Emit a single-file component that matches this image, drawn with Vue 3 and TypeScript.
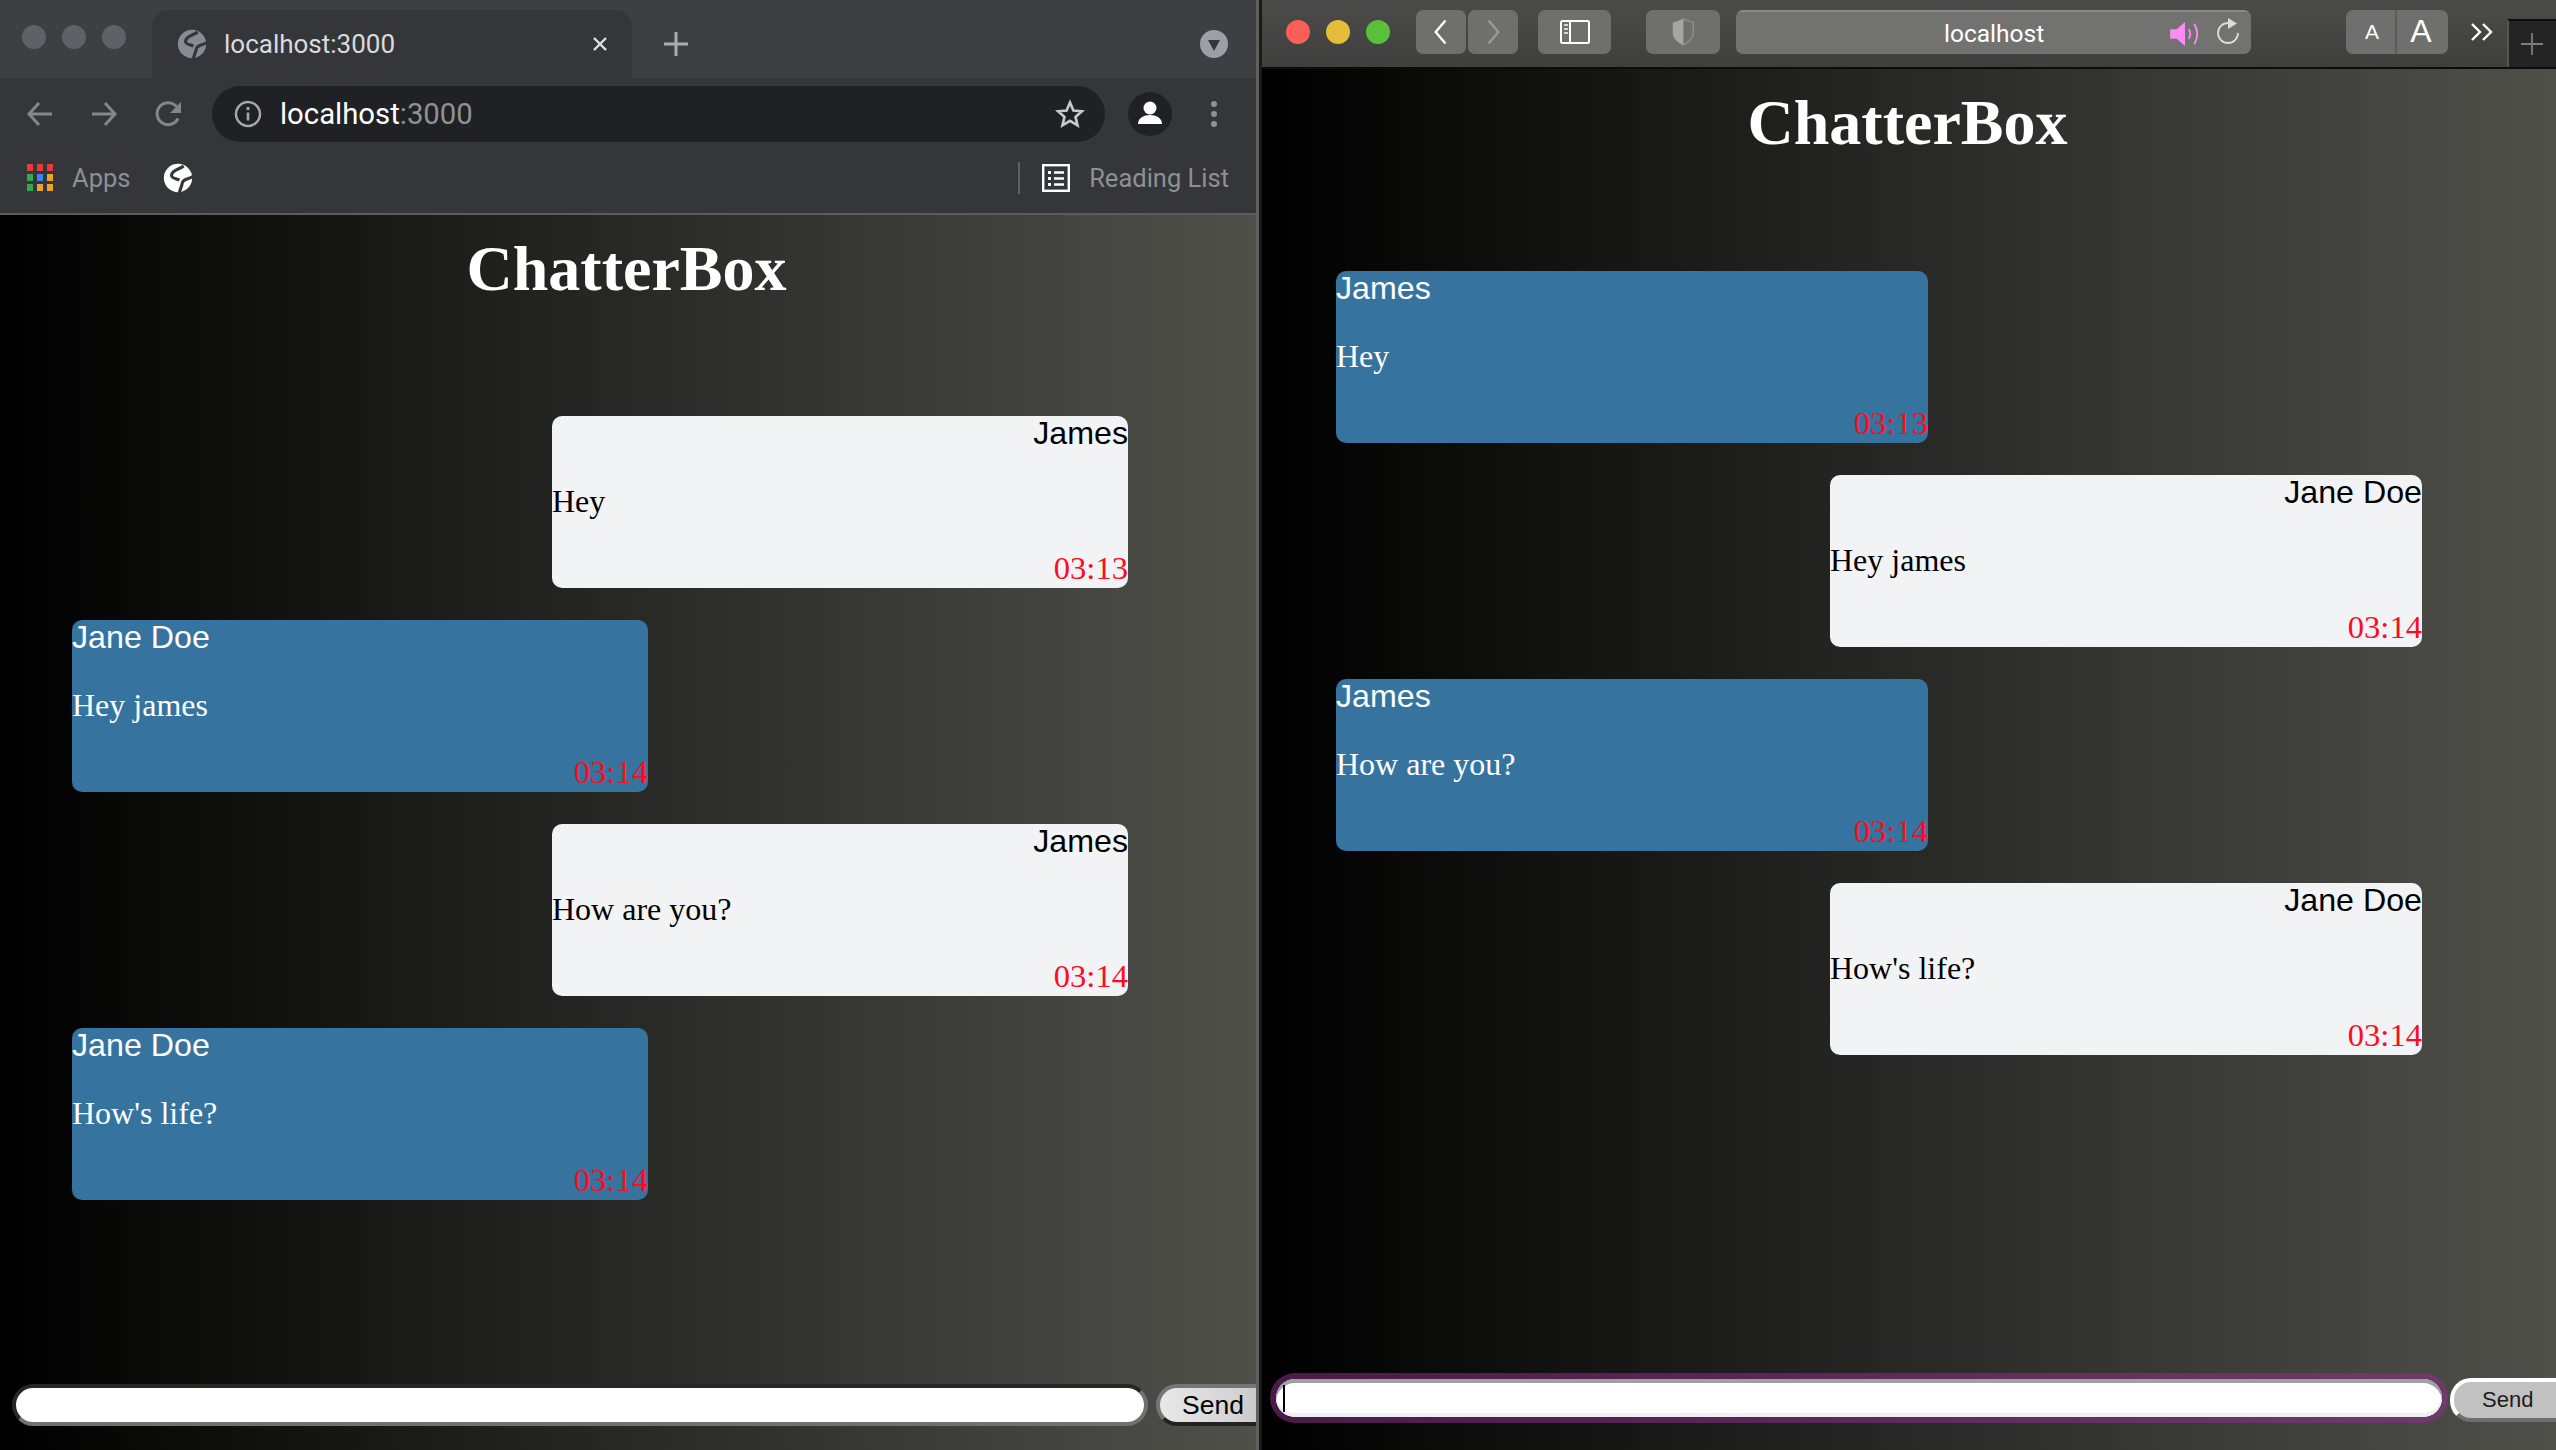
<script setup lang="ts">
interface Msg { id: number; name: string; text: string; time: string; own: boolean }
const chromeMsgs: Msg[] = [
  { id: 1, name: 'James', text: 'Hey', time: '03:13', own: true },
  { id: 2, name: 'Jane Doe', text: 'Hey james', time: '03:14', own: false },
  { id: 3, name: 'James', text: 'How are you?', time: '03:14', own: true },
  { id: 4, name: 'Jane Doe', text: "How's life?", time: '03:14', own: false },
]
const safariMsgs: Msg[] = chromeMsgs.map((m) => ({ ...m, own: !m.own }))
const swirlA = 'M16 3.500C13 6 8.500 6 7.500 9.500 6.800 12.500 10.500 12 13 13.500'
const swirlB = 'M22.500 11C19 13 15.500 12.500 15 15.500 14.700 18 13.500 19.500 13 22.500'
</script>

<template>
  <div class="desk">
    <section class="win win-chrome">
      <header class="chrome-bar">
        <div class="tabstrip">
          <div class="lights">
            <i class="dot"></i><i class="dot"></i><i class="dot"></i>
          </div>
          <div class="tab">
            <svg class="fav" viewBox="0 0 24 24"><circle cx="12" cy="12" r="10" fill="#868c92" /><path :d="swirlA" stroke="#35363a" stroke-width="2.200" fill="none" /><path :d="swirlB" stroke="#35363a" stroke-width="2.200" fill="none" /></svg>
            <span class="tab-title">localhost:3000</span>
            <svg class="tab-x" viewBox="0 0 18 18"><path d="M3 3l12 12M15 3L3 15" stroke="#dfe1e3" stroke-width="2.400" fill="none" /></svg>
          </div>
          <svg class="tab-plus" viewBox="0 0 24 24"><path d="M12 1v22M1 12h22" stroke="#a9adb1" stroke-width="3" stroke-linecap="round" fill="none" /></svg>
          <span class="tab-menu"><svg viewBox="0 0 28 28"><circle cx="14" cy="14" r="14" fill="#9aa0a6" /><path d="M8 10h12l-6 11z" fill="#35363a" /></svg></span>
        </div>
        <div class="navbar">
          <svg class="nav-ico" viewBox="0 0 28 28"><path d="M26 14H3M13 3L3 14l10 11" stroke="#84878a" stroke-width="3" fill="none" /></svg>
          <svg class="nav-ico" viewBox="0 0 28 28"><path d="M2 14h23M15 3l10 11-10 11" stroke="#84878a" stroke-width="3" fill="none" /></svg>
          <svg class="nav-ico" viewBox="0 0 28 28"><path d="M23 18.500A11 11 0 1 1 21.500 6.500" stroke="#84878a" stroke-width="3" fill="none" /><path d="M26 2v11H15z" fill="#84878a" /></svg>
          <div class="omnibox">
            <svg class="info" viewBox="0 0 28 28"><circle cx="14" cy="14" r="12" stroke="#a5a7a9" stroke-width="2.500" fill="none" /><path d="M14 12.500v8" stroke="#a5a7a9" stroke-width="2.600" /><circle cx="14" cy="8.500" r="1.700" fill="#a5a7a9" /></svg>
            <span class="omni-text"><span class="omni-host">localhost</span>:3000</span>
            <svg class="star" viewBox="0 0 30 30"><path d="M15 3.500l3.400 8 8.600.7-6.500 5.700 2 8.400-7.500-4.500-7.500 4.500 2-8.400L3 12.200l8.600-.7z" stroke="#c8cacc" stroke-width="2.600" fill="none" /></svg>
          </div>
          <span class="avatar"><svg viewBox="0 0 44 44"><circle cx="22" cy="16" r="6.500" fill="#fff" /><path d="M10 32c0-6 6-9 12-9s12 3 12 9z" fill="#fff" /></svg></span>
          <span class="kebab"><i></i><i></i><i></i></span>
        </div>
        <div class="bookmarks">
          <span class="apps-grid"><i v-for="(c, i) in ['#e8393b','#e8393b','#e8393b','#35a853','#3a83f1','#eda22b','#35a853','#eda22b','#eda22b']" :key="i" :style="{ background: c }"></i></span>
          <span class="bm-label">Apps</span>
          <svg class="bm-globe" viewBox="0 0 24 24"><circle cx="12" cy="12" r="10" fill="#fff" /><path :d="swirlA" stroke="#35363a" stroke-width="2.200" fill="none" /><path :d="swirlB" stroke="#35363a" stroke-width="2.200" fill="none" /></svg>
          <span class="bm-sep"></span>
          <svg class="list-ico" viewBox="0 0 28 28"><rect x="1.200" y="1.200" width="25.600" height="25.600" fill="none" stroke="#fff" stroke-width="2.400" /><path d="M6 7h3v3H6zM6 13h3v3H6zM6 19h3v3H6z" fill="#fff" /><path d="M12 8.500h10M12 14.500h10M12 20.500h10" stroke="#fff" stroke-width="2.400" /></svg>
          <span class="bm-label">Reading List</span>
        </div>
      </header>
      <main class="page">
        <h1 class="title">ChatterBox</h1>
        <div class="thread">
          <article v-for="m in chromeMsgs" :key="m.id" class="bubble" :class="m.own ? 'own' : 'other'">
            <h4 class="name">{{ m.name }}</h4>
            <p class="text">{{ m.text }}</p>
            <time class="time">{{ m.time }}</time>
          </article>
        </div>
        <form class="composer" @submit.prevent>
          <input class="field" type="text" aria-label="Message" />
          <button class="send">Send</button>
        </form>
      </main>
    </section>

    <div class="split"></div>

    <section class="win win-safari">
      <header class="safari-bar">
        <div class="traffic"><i class="red"></i><i class="yellow"></i><i class="green"></i></div>
        <div class="pair">
          <span class="sbtn nav"><svg viewBox="0 0 18 30"><path d="M14 2L3 15l11 13" stroke="#fff" stroke-width="2.600" fill="none" /></svg></span>
          <span class="sbtn nav"><svg viewBox="0 0 18 30"><path d="M4 2l11 13L4 28" stroke="#9b9b99" stroke-width="2.600" fill="none" /></svg></span>
        </div>
        <span class="sbtn side"><svg viewBox="0 0 30 24"><rect x="1" y="1" width="28" height="22" rx="1.500" fill="none" stroke="#fff" stroke-width="2" /><path d="M10 1v22" stroke="#fff" stroke-width="2" /><path d="M4 5h4M4 9h4M4 13h4" stroke="#d8d8d8" stroke-width="2" /></svg></span>
        <span class="sbtn shield"><svg viewBox="0 0 24 30"><path d="M12 1l11 4v11c0 6-5 10-11 13z" fill="#6f6f6d" stroke="#8f8f8d" stroke-width="1.500" /><path d="M12 1L1 5v11c0 6 5 10 11 13z" fill="#a5a5a3" /></svg></span>
        <div class="urlbar">
          <span class="url-text">localhost</span>
          <svg class="sound" viewBox="0 0 32 28"><path d="M0 9h7l9-8v26l-9-8H0z" fill="#fb8af3" /><path d="M20 9c2 3 2 7 0 10M26 3c4 7 4 15 0 22" stroke="#fb8af3" stroke-width="2" fill="none" /></svg>
          <svg class="sreload" viewBox="0 0 24 26"><path d="M12 5A10 10 0 1 0 22 15" stroke="#dcdcdc" stroke-width="1.800" fill="none" /><path d="M12 0l9 5.500-9 5.500z" fill="#dcdcdc" /></svg>
        </div>
        <div class="font-size">
          <span class="a-small">A</span>
          <span class="a-large">A</span>
        </div>
        <svg class="more" viewBox="0 0 24 20"><path d="M2 2l8 8-8 8M13 2l8 8-8 8" stroke="#fff" stroke-width="2.400" fill="none" /></svg>
        <span class="newtab"><svg viewBox="0 0 24 24"><path d="M12 1v22M1 12h22" stroke="#7d7d7b" stroke-width="1.800" fill="none" /></svg></span>
      </header>
      <main class="page">
        <h1 class="title">ChatterBox</h1>
        <div class="thread">
          <article v-for="m in safariMsgs" :key="m.id" class="bubble" :class="m.own ? 'own' : 'other'">
            <h4 class="name">{{ m.name }}</h4>
            <p class="text">{{ m.text }}</p>
            <time class="time">{{ m.time }}</time>
          </article>
        </div>
        <form class="composer" @submit.prevent>
          <div class="field-focus"><span class="caret"></span></div>
          <button class="send">Send</button>
        </form>
      </main>
    </section>
  </div>
</template>

<style>
html, body { margin: 0; background: #000; overflow: hidden; }
</style>

<style scoped>
.desk { display: flex; width: 2556px; height: 1450px; overflow: hidden; }
.win { display: flex; flex-direction: column; height: 100%; overflow: hidden; }
.win-chrome { width: 1256px; }
.win-safari { width: 1294px; }
.split { width: 6px; background: linear-gradient(90deg, #5f5f5d 0 3px, #1a1a1a 3px); }
i { display: block; }

/* chrome */
.chrome-bar { background: #35363a; height: 215px; box-sizing: border-box; border-bottom: 2px solid #5c5c5a; flex: none; font-family: Roboto, "Liberation Sans", sans-serif; }
.tabstrip { height: 78px; background: #3d4043; display: flex; align-items: flex-start; }
.lights { display: flex; gap: 16px; padding: 25px 0 0 22px; width: 130px; box-sizing: border-box; }
.dot { width: 24px; height: 24px; border-radius: 50%; background: #5e6266; }
.tab { margin-top: 10px; width: 480px; height: 68px; background: #35363a; border-radius: 16px 16px 0 0; display: flex; align-items: center; box-sizing: border-box; padding: 0 23px 0 26px; position: relative; margin-left: 22px; }
.fav { width: 34px; height: 34px; margin-left: -3px; flex: none; }
.tab-title { color: #d9dbdd; font-size: 26px; margin-left: 15px; flex: 1; }
.tab-x { width: 18px; height: 18px; flex: none; }
.tab-plus { width: 24px; height: 24px; margin: 32px 0 0 32px; flex: none; }
.tab-menu { width: 28px; height: 28px; margin: 30px 0 0 512px; flex: none; }
.tab-menu svg { display: block; width: 28px; height: 28px; }
.navbar { height: 72px; display: flex; align-items: center; padding: 0 0 0 26px; position: relative; }
.nav-ico { width: 28px; height: 28px; margin-right: 36px; flex: none; }
.nav-ico:nth-child(2) { margin-right: 37px; }
.nav-ico:nth-child(3) { margin-right: 29px; }
.omnibox { width: 893px; height: 56px; border-radius: 28px; background: #202124; display: flex; align-items: center; padding: 0 20px 0 22px; box-sizing: border-box; flex: none; }
.info { width: 28px; height: 28px; flex: none; }
.omni-text { color: #8f9193; font-size: 29.300px; margin-left: 18px; flex: 1; }
.omni-host { color: #fff; }
.star { width: 30px; height: 30px; flex: none; }
.avatar { width: 44px; height: 44px; border-radius: 50%; background: #202124; margin-left: 23px; flex: none; }
.avatar svg { display: block; width: 44px; height: 44px; }
.kebab { display: flex; flex-direction: column; gap: 4px; margin-left: 39px; }
.kebab i { width: 6px; height: 6px; border-radius: 50%; background: #8f9194; }
.bookmarks { height: 63px; display: flex; align-items: center; padding: 0 27px 8px 27px; box-sizing: border-box; color: #8d9093; font-size: 25.500px; }
.apps-grid { width: 26px; height: 27px; display: grid; grid-template-columns: repeat(3, 6px); grid-auto-rows: 7px; justify-content: space-between; align-content: space-between; flex: none; }
.bm-label { flex: none; }
.apps-grid + .bm-label { margin-left: 19px; }
.bm-globe { width: 34px; height: 34px; margin-left: 31px; flex: none; }
.bm-sep { width: 2px; height: 32px; background: #5f6063; margin-left: auto; flex: none; }
.list-ico { width: 28px; height: 28px; margin: 0 19px 0 22px; flex: none; }

/* page */
.page { flex: 1; min-height: 0; display: flex; flex-direction: column; background: linear-gradient(90deg, #000, #50504b); overflow: hidden; }
.title { margin: 17px 0 0; padding-right: 3px; font: bold 64px/73px "Liberation Serif", serif; color: #fff; text-align: center; }
.thread { display: flex; flex-direction: column; gap: 32px; }
.win-chrome .thread { padding: 111px 128px 0 72px; }
.win-safari .thread { padding: 112px 134px 0 74px; }
.bubble { height: 172px; border-radius: 10px; display: flex; flex-direction: column; }
.win-chrome .bubble { width: 576px; }
.win-safari .bubble { width: 592px; }
.own { background: #f2f3f5; color: #000; align-self: flex-end; }
.other { background: #36749f; color: #fff; align-self: flex-start; }
.name { margin: 0; font: normal 32.200px/34px "Liberation Sans", Arial, sans-serif; }
.own .name { text-align: right; }
.text { margin: 33px 0 0; font: 32px/37px "Liberation Serif", serif; }
.time { margin: auto 0 2px; font: 32.600px/36px "Liberation Serif", serif; color: #ff0a1e; text-align: right; }

/* composer */
.composer { margin-top: auto; display: flex; align-items: flex-start; flex: none; }
.win-chrome .composer { padding: 0 0 24px 12px; gap: 8px; }
.win-safari .composer { padding: 0 0 27px 8px; gap: 2px; }
.field { width: 1136px; height: 42px; box-sizing: border-box; border-radius: 21px; border: 4px solid; border-color: #262626 #707070 #707070 #262626; background: #fff; padding: 0; outline: none; flex: none; }
.send { flex: none; height: 42px; width: 130px; box-sizing: border-box; border-radius: 21px; font: 26.500px/30px "Liberation Sans", Arial, sans-serif; color: #000; padding: 0 0 0 22px; text-align: left; }
.win-chrome .send { border: 4px solid; border-color: #757575 #222 #222 #757575; background: linear-gradient(90deg, #e8e8e8, #d4d4d4 60%, #bdbdbd); }
.win-safari .send { height: 44px; margin-top: 5px; border: 4px solid; border-color: #fff #6e6e6e #6e6e6e #fff; background: #c1c1c1; font-size: 22px; color: #1c1c1c; padding-left: 28px; }
.field-focus { width: 1178px; height: 50px; box-sizing: border-box; border-radius: 25px; border: 6px solid transparent; background: linear-gradient(#fff, #fff) padding-box, linear-gradient(90deg, #4a1a48, #6e3a6c) border-box; box-shadow: inset 0 4px 0 #a0a0a0, inset 0 -4px 0 #efefef; flex: none; padding: 6px 0 0 7px; }
.caret { display: block; width: 2px; height: 27px; background: #000; }

/* safari */
.safari-bar { height: 69px; flex: none; box-sizing: border-box; border-bottom: 2px solid #0c0c0c; background: linear-gradient(180deg, #4b4b49, #3f3f3d); display: flex; align-items: flex-start; padding: 10px 0 0 24px; font-family: Inter, "Liberation Sans", sans-serif; position: relative; }
.traffic { display: flex; gap: 16px; padding-top: 10px; width: 130px; flex: none; }
.traffic i { width: 24px; height: 24px; border-radius: 50%; }
.red { background: #fc5f57; }
.yellow { background: #e5bd3a; }
.green { background: #5abf3b; }
.pair { display: flex; gap: 2px; flex: none; }
.sbtn { height: 44px; border-radius: 7px; background: #6f6f6d; display: flex; align-items: center; justify-content: center; flex: none; }
.nav { width: 50px; }
.nav svg { width: 16px; height: 28px; }
.side { width: 73px; margin-left: 20px; }
.side svg { width: 30px; height: 24px; }
.shield { width: 74px; margin-left: 35px; }
.shield svg { width: 24px; height: 28px; }
.urlbar { width: 515px; height: 44px; margin-left: 16px; border-radius: 7px; background: linear-gradient(180deg, #8a8a88 0 2px, #727270 2px); flex: none; color: #fff; position: relative; }
.url-text { font-size: 24.500px; position: absolute; left: 208px; top: 9px; font-family: Roboto, "Liberation Sans", sans-serif; }
.sound { width: 36px; height: 26px; position: absolute; left: 431px; top: 11px; }
.sreload { width: 24px; height: 26px; position: absolute; left: 480px; top: 8px; }
.font-size { width: 102px; height: 44px; margin-left: 95px; border-radius: 7px; background: #6f6f6d; display: flex; color: #fff; flex: none; font-family: "Liberation Sans", sans-serif; font-weight: 400; }
.a-small { width: 51px; padding-left: 3px; text-align: center; font-size: 21px; line-height: 44px; border-right: 2px solid #5c5c5a; box-sizing: border-box; }
.a-large { width: 48px; text-align: center; font-size: 32px; line-height: 42px; }
.more { width: 24px; height: 20px; margin: 12px 0 0 22px; flex: none; }
.newtab { position: absolute; right: 0; top: 19px; width: 49px; height: 48px; background: #242424; border-top: 2px solid #0e0e0e; border-left: 2px solid #555; box-sizing: border-box; display: flex; align-items: center; justify-content: center; }
.newtab svg { width: 24px; height: 24px; margin-left: -2px; }
</style>
